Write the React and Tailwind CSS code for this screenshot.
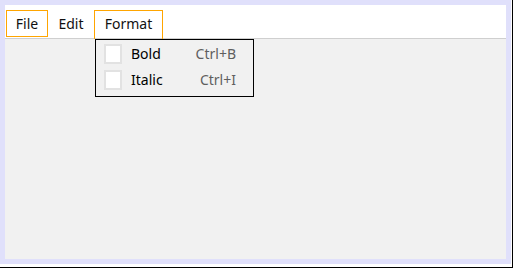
import React from "react";

function Check() {
  return (
    <span className="w-[18px] h-[20px] shrink-0 border-2 border-[#e2e2e2] bg-white" />
  );
}

function MenuRow({ label, shortcut }) {
  return (
    <div className="flex items-center h-[26px] pl-[8px] pr-[17px]">
      <Check />
      <span className="ml-[9px] flex-1 text-black">{label}</span>
      <span className="text-[#5f5f5f]">{shortcut}</span>
    </div>
  );
}

export default function App() {
  return (
    <div className="w-[514px] h-[269px] bg-white font-['Noto_Sans',sans-serif] text-[14px] leading-none">
      <div className="w-[513px] h-[268px] border-r border-b border-black pr-px pb-[3px] flex">
        <div className="flex-1 bg-[#e0e0fb] p-[5px] flex">
          <div className="flex-1 flex flex-col bg-[#f1f1f1]">
            {/* Menu bar */}
            <div className="h-[34px] bg-white border-b border-[#cfcfcf] flex items-start pt-[5px] pl-px">
              <div className="w-[42px] h-[27px] border border-[#ffa500] flex items-center justify-center text-[#111]">
                File
              </div>
              <div className="w-[46px] h-[27px] flex items-center justify-center text-[#111]">
                Edit
              </div>
              <div className="relative">
                <div className="w-[69px] h-[29px] border border-b-0 border-[#ffa500] flex items-center justify-center pb-[2px] text-[#111]">
                  Format
                </div>
                <div className="absolute top-full left-px w-[159px] h-[58px] border border-black bg-[#f1f1f1] pt-px z-10">
                  <MenuRow label="Bold" shortcut="Ctrl+B" />
                  <MenuRow label="Italic" shortcut="Ctrl+I" />
                </div>
              </div>
            </div>
            <div className="flex-1" />
          </div>
        </div>
      </div>
    </div>
  );
}
